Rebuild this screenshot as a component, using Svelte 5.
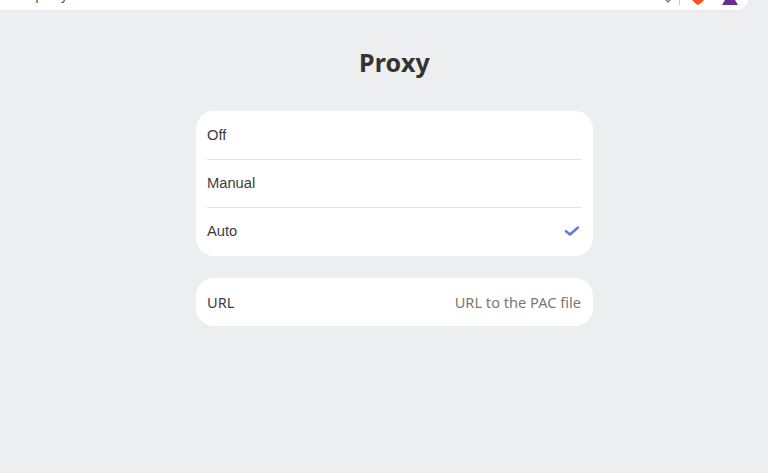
<script>
    const modes = [
        { label: "Off", active: false },
        { label: "Manual", active: false },
        { label: "Auto", active: true },
    ];
</script>

<div class="page">
    <header class="toolbar">
        <span class="address">/proxy</span>
        <div class="tools">
            <svg class="chevron" viewBox="0 0 8 3" width="8" height="3">
                <path d="M1 -1 L4 2 L7 -1" fill="none" stroke="#7a7a7a" stroke-width="1.4" />
            </svg>
            <span class="divider"></span>
            <svg class="shield" viewBox="0 0 12 5" width="12" height="5">
                <path d="M0 0 H12 L9 3 L6 5 L3 3 Z" fill="#f4511e" />
            </svg>
            <svg class="ext" viewBox="0 0 16 5" width="16" height="5">
                <path d="M3 0 H13 L16 5 H0 Z" fill="#6a2c91" />
            </svg>
        </div>
    </header>

    <main class="content">
        <h1>Proxy</h1>

        <section class="card modes">
            {#each modes as mode}
                <div class="row">
                    <span class="label">{mode.label}</span>
                    {#if mode.active}
                        <svg class="check" viewBox="0 0 16 12" width="16" height="12">
                            <path
                                d="M2 6.2 L6 9.6 L14 2.6"
                                fill="none"
                                stroke="#5f7fd0"
                                stroke-width="2.6"
                                stroke-linecap="round"
                                stroke-linejoin="round"
                            />
                        </svg>
                    {/if}
                </div>
            {/each}
        </section>

        <section class="card">
            <div class="row">
                <span class="url">URL</span>
                <span class="hint">URL to the PAC file</span>
            </div>
        </section>
    </main>
</div>

<style>
    :global(body) {
        margin: 0;
        background: #eceeef;
    }

    .page {
        height: 473px;
        overflow: hidden;
        background: #eceeef;
        display: flex;
        flex-direction: column;
    }

    .toolbar {
        flex: none;
        width: 748px;
        height: 10px;
        background: #fff;
        border-bottom-right-radius: 10px;
        box-shadow: 0 1px 2px rgba(0, 0, 0, 0.03);
        display: flex;
        justify-content: space-between;
        overflow: hidden;
    }

    .address {
        margin: -11px 0 0 32px;
        font-family: "Liberation Sans", sans-serif;
        font-size: 13px;
        line-height: 14px;
        color: #444;
    }

    .tools {
        display: flex;
        align-items: flex-start;
    }

    .chevron {
        margin-right: 7px;
    }

    .divider {
        width: 1px;
        height: 5px;
        background: #c8c8c8;
        margin-right: 12px;
    }

    .shield {
        margin-right: 18px;
    }

    .ext {
        margin-right: 10px;
    }

    .content {
        width: 397px;
        margin-left: 196px;
        display: flex;
        flex-direction: column;
        gap: 22px;
    }

    h1 {
        margin: 36px 0 11px;
        text-align: center;
        font-family: "Noto Sans", sans-serif;
        font-size: 25px;
        line-height: 32px;
        font-weight: 700;
        letter-spacing: 0.2px;
        color: #333;
    }

    .card {
        background: #fff;
        border-radius: 18px;
        padding: 0 12px 0 11px;
    }

    .modes {
        padding-top: 1px;
    }

    .row {
        height: 48px;
        box-sizing: border-box;
        display: flex;
        align-items: center;
        justify-content: space-between;
        border-bottom: 1px solid #e2e2e2;
    }

    .row:last-child {
        border-bottom: none;
    }

    .label {
        padding-bottom: 2px;
        font-family: "Liberation Sans", sans-serif;
        font-size: 14.7px;
        color: #3d3d3d;
    }

    .check {
        margin: 0 1px 2px 0;
    }

    .url {
        font-family: "Noto Sans", sans-serif;
        font-size: 14.6px;
        color: #3d3d3d;
    }

    .hint {
        font-family: "Noto Sans", sans-serif;
        font-size: 14.6px;
        color: #7d7772;
    }
</style>
